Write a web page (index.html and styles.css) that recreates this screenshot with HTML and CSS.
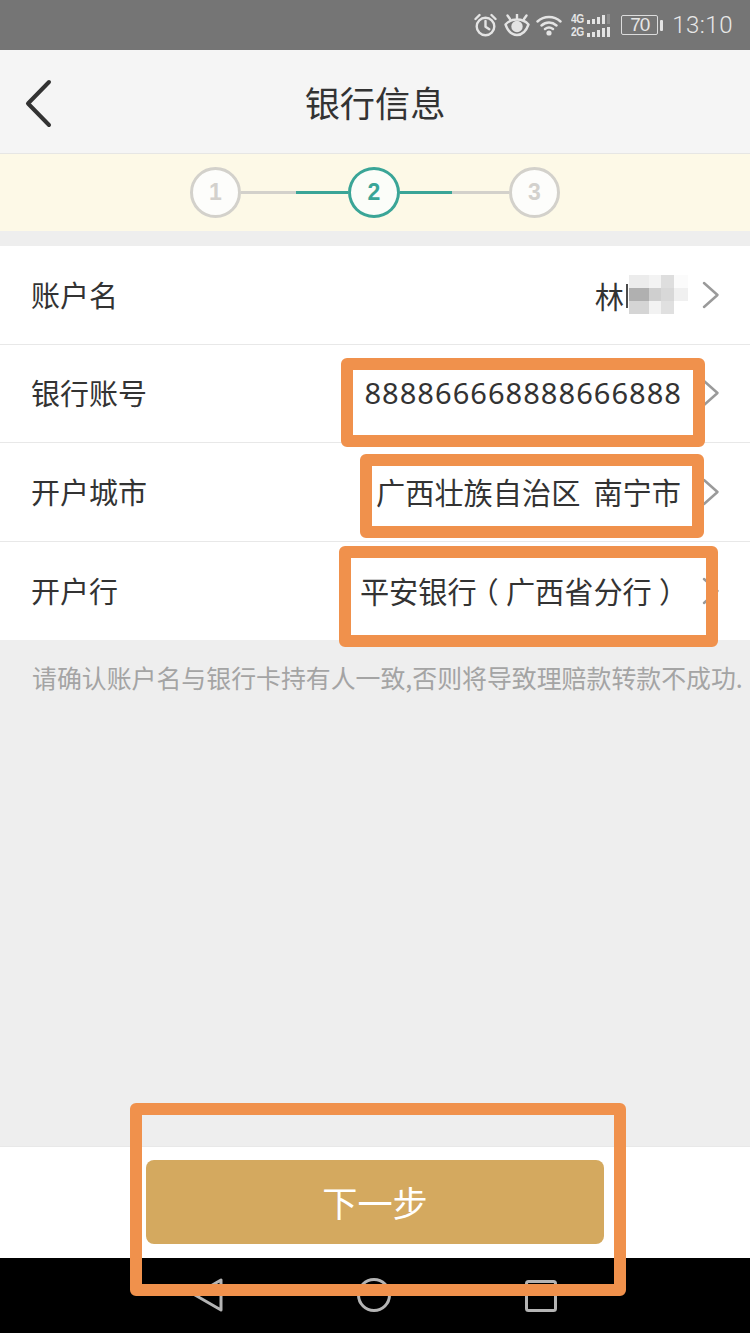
FILE: index.html
```html
<!DOCTYPE html>
<html lang="zh-CN">
<head>
<meta charset="utf-8">
<title>银行信息</title>
<link rel="stylesheet" href="styles.css">
</head>
<body>
<div class="phone">
  <header class="statusbar">
    <svg class="st-ic alarm" viewBox="0 0 23 24" width="23" height="24"><circle cx="11.500" cy="13.500" r="8.800"/><path d="M11.500 8v5.700l3.800 2.500M1.500 6 5.500 2M21.500 6l-4-4"/></svg>
    <svg class="st-ic eye" viewBox="0 0 26 23" width="26" height="23"><path d="M1.500 10.500C4.500 7 8.500 5.500 13 5.500s8.500 1.500 11.500 5c-2.500 7-6.500 10.500-11.500 10.500S4 17.500 1.500 10.500Z"/><circle class="fill" cx="13" cy="12.500" r="4.500"/><path d="M6 5 3.500 1.500M13 4V.5M20 5l2.500-3.500"/></svg>
    <svg class="st-ic wifi" viewBox="0 0 26 22" width="26" height="22"><path d="M1.500 7.500C8 1.500 18 1.500 24.500 7.500M5.500 11.500c4.500-4 10.500-4 15 0M9 15c2.500-2 5.500-2 8 0"/><circle class="fill nostroke" cx="13" cy="19" r="2.600"/></svg>
    <div class="signal">
      <div class="sig-row"><span class="net">4G</span><i class="b1"></i><i class="b2"></i><i class="b3"></i><i class="b4"></i><i class="b5 dim"></i></div>
      <div class="sig-row"><span class="net">2G</span><i class="b1"></i><i class="b2"></i><i class="b3"></i><i class="b4"></i><i class="b5"></i></div>
    </div>
    <div class="battery"><span class="batt-body">70</span><span class="batt-cap"></span></div>
    <span class="clock">13:10</span>
  </header>

  <nav class="navbar">
    <svg class="back" viewBox="0 0 30 50" width="30" height="50"><path d="M25 4 4 25.500 25 47"/></svg>
    <h1 class="title">银行信息</h1>
  </nav>

  <section class="stepper">
    <span class="step">1</span>
    <span class="link first"><i class="seg grey"></i><i class="seg teal"></i></span>
    <span class="step active">2</span>
    <span class="link second"><i class="seg teal"></i><i class="seg grey"></i></span>
    <span class="step">3</span>
  </section>

  <main class="content">
    <ul class="form">
      <li class="row">
        <span class="label">账户名</span>
        <span class="value name">林<span class="stub"></span><span class="mosaic"><i class="m m1"></i><i class="m m2"></i><i class="m m3"></i><i class="m m4"></i><i class="m m5"></i><i class="m m6"></i><i class="m m7"></i><i class="m m8"></i><i class="m m9"></i><i class="m m10"></i><i class="m m11"></i><i class="m m12"></i></span></span>
        <svg class="chev" viewBox="0 0 18 28" width="18" height="28"><path d="M2 2 15.500 14 2 26"/></svg>
      </li>
      <li class="row">
        <span class="label">银行账号</span>
        <span class="value digits">888866668888666888</span>
        <svg class="chev" viewBox="0 0 18 28" width="18" height="28"><path d="M2 2 15.500 14 2 26"/></svg>
      </li>
      <li class="row">
        <span class="label">开户城市</span>
        <span class="value">广西壮族自治区&nbsp;&nbsp;南宁市</span>
        <svg class="chev" viewBox="0 0 18 28" width="18" height="28"><path d="M2 2 15.500 14 2 26"/></svg>
      </li>
      <li class="row">
        <span class="label">开户行</span>
        <span class="value">平安银行<span class="paren">（</span>广西省分行<span class="paren">）</span></span>
        <svg class="chev" viewBox="0 0 18 28" width="18" height="28"><path d="M2 2 15.500 14 2 26"/></svg>
      </li>
    </ul>
    <p class="hint">请确认账户名与银行卡持有人一致,否则将导致理赔款转款不成功.</p>
  </main>

  <div class="actionbar"><button class="next" type="button">下一步</button></div>

  <footer class="sysnav">
    <svg class="sys" viewBox="0 0 30 34" width="30" height="34"><path d="M28 2v30L2 17Z"/></svg>
    <svg class="sys" viewBox="0 0 34 34" width="34" height="34"><circle cx="17" cy="17" r="15.500"/></svg>
    <svg class="sys" viewBox="0 0 32 32" width="32" height="32"><rect x="1.500" y="1.500" width="29" height="29" rx="2"/></svg>
  </footer>

  <div class="mark mark-account"></div>
  <div class="mark mark-city"></div>
  <div class="mark mark-branch"></div>
  <div class="mark mark-next"></div>
</div>
</body>
</html>
```
FILE: styles.css
```css
* { box-sizing: border-box; }
html, body { margin: 0; padding: 0; }
body { font-family: "Noto Sans CJK SC", "Noto Sans", sans-serif; background: #eeeeee; }
.phone { position: relative; width: 750px; height: 1333px; display: flex; flex-direction: column; overflow: hidden; background: #eeeeee; }

.statusbar { height: 50px; background: #757575; display: flex; align-items: center; justify-content: flex-end; padding-right: 17px; color: #e6e6e6; flex: none; }
.st-ic { fill: none; stroke: #e4e4e4; stroke-width: 2.400; stroke-linecap: round; stroke-linejoin: round; }
.st-ic .fill { fill: #e4e4e4; }
.st-ic .nostroke { stroke: none; }
.alarm { margin-right: 7px; }
.eye { margin-right: 6px; }
.wifi { margin-right: 9px; }
.signal { display: flex; flex-direction: column; gap: 3px; margin-right: 10px; width: 40px; }
.sig-row { display: flex; align-items: flex-end; gap: 2px; height: 10px; }
.net { font: 700 12px/10px "Liberation Sans", sans-serif; width: 14px; letter-spacing: -.5px; transform: scaleX(.85); transform-origin: left center; white-space: nowrap; }
.sig-row i { display: block; width: 3px; background: #e4e4e4; }
.b1 { height: 4px; } .b2 { height: 5px; } .b3 { height: 7px; } .b4 { height: 9px; } .b5 { height: 10px; }
.sig-row i.dim { background: #8c8c8c; }
.battery { display: flex; align-items: center; gap: 2px; margin-right: 9px; }
.batt-body { width: 37px; height: 20px; border: 1.500px solid #dcdcdc; border-radius: 2px; font: 400 19px/17px "Liberation Sans", sans-serif; letter-spacing: -1px; text-align: center; }
.batt-cap { width: 3px; height: 11px; background: #e4e4e4; border-radius: 1px; }
.clock { font: 300 24px/30px Roboto, sans-serif; letter-spacing: .5px; color: #e8e8e8; }

.navbar { height: 104px; background: #f5f5f5; border-bottom: 1px solid #e6e6e4; display: flex; align-items: center; justify-content: center; position: relative; flex: none; }
.back { position: absolute; left: 24px; top: 28px; fill: none; stroke: #333333; stroke-width: 4; stroke-linecap: round; stroke-linejoin: round; }
.title { margin: 0; padding-top: 2px; font-size: 35.200px; font-weight: 400; color: #333333; line-height: 1.2; }

.stepper { height: 77px; background: #fdf9e7; display: flex; align-items: center; justify-content: center; flex: none; }
.step { width: 51px; height: 51px; border-radius: 50%; border: 3px solid #d3d1cb; background: #fdfdfb; color: #d3d1cd; font: 700 23px/45px "Liberation Sans", sans-serif; text-align: center; flex: none; }
.step.active { width: 52px; border-color: #3aa597; color: #3aa597; background: #fbfdf9; }
.link { display: flex; flex: none; }
.link.first { width: 107px; }
.link.second { width: 109px; }
.seg { display: block; height: 3px; }
.seg.grey { background: #d3d1cb; flex: 1; }
.seg.teal { background: #3aa597; width: 52px; }

.content { flex: 1; padding-top: 15px; }
.form { margin: 0; padding: 0; list-style: none; background: #fff; }
.row { height: 98.500px; display: flex; align-items: center; padding: 0 30px 0 31px; border-bottom: 1px solid #e8e8e8; color: #333333; }
.row:last-child { border-bottom: 0; }
.label { font-size: 29px; flex: 1; padding-bottom: 2px; }
.value { font-size: 29.200px; margin-right: 21px; padding-bottom: 2px; white-space: nowrap; }
.digits { font-family: "Noto Sans", sans-serif; font-size: 29.100px; letter-spacing: 1px; margin-right: 20px; padding-bottom: 0; }
.paren { font-feature-settings: "halt"; padding: 0 .25em; }
.row .chev { flex: none; fill: none; stroke: #9a9a9a; stroke-width: 2.500; stroke-linecap: round; stroke-linejoin: round; }
.name { display: flex; align-items: center; margin-right: 14px; padding-bottom: 0; }
.stub { width: 2px; height: 24px; background: #4a4a4a; margin: 2px 1px 0 2px; }
.mosaic { display: grid; grid-template-columns: 20px 12px 13px 14px; grid-template-rows: repeat(3, 13px); }
.m { display: block; }
.m1 { background: #ececec; } .m2 { background: #f3f3f3; } .m3 { background: #dedede; } .m4 { background: #fbfbfb; }
.m5 { background: #b0b0b0; } .m6 { background: #cfcfcf; } .m7 { background: #d8d8d8; } .m8 { background: #f0f0f0; }
.m9 { background: #d5d5d5; } .m10 { background: #f2f2f2; } .m11 { background: #e0e0e0; } .m12 { background: #ffffff; }

.hint { margin: 22px 0 0 32px; font-size: 24.900px; line-height: 30px; color: #a4a4a4; white-space: nowrap; }

.actionbar { height: 112px; background: #fff; border-top: 1px solid #e8e8e8; padding: 13px 146px 0; flex: none; }
.next { display: block; width: 458px; height: 84px; border: 0; border-radius: 8px; background: #d4a95f; color: #fff; font-family: inherit; font-size: 35.200px; padding: 0 0 2px; }

.sysnav { height: 75px; background: #000; display: flex; justify-content: space-between; align-items: flex-end; padding: 0 193px 21px 193px; flex: none; }
.sys { fill: none; stroke: #b4b4b4; stroke-width: 3; stroke-linejoin: round; }

.mark { position: absolute; border: 12px solid #f0914c; border-radius: 6px; }
.mark-account { left: 341px; top: 358px; width: 364px; height: 89px; }
.mark-city { left: 360px; top: 454px; width: 344px; height: 84px; }
.mark-branch { left: 339px; top: 546px; width: 379px; height: 101px; }
.mark-next { left: 130px; top: 1103px; width: 496px; height: 193px; }
```
